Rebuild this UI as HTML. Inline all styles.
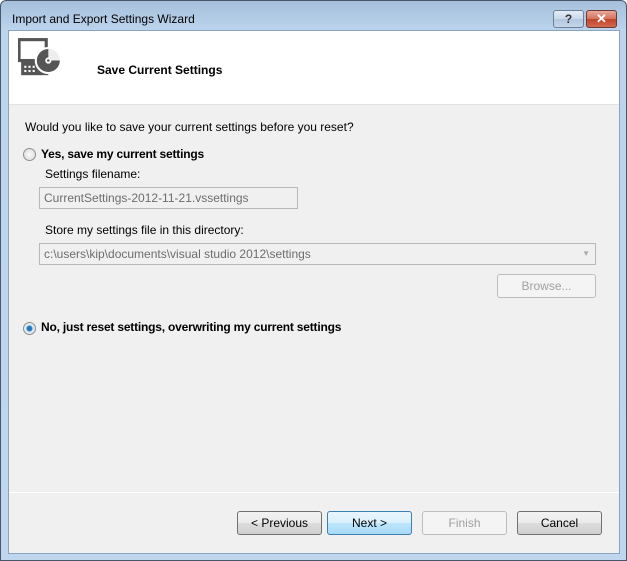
<!DOCTYPE html>
<html><head><style>
*{margin:0;padding:0;box-sizing:border-box}
body{width:627px;height:561px;overflow:hidden;font-family:"Liberation Sans",sans-serif;font-size:12px;color:#000}
#win{position:absolute;left:0;top:0;width:627px;height:561px;border:1px solid #48586a;border-radius:6px 6px 0 0;background:linear-gradient(#a6c0dc,#bcd4ec 30px,#bfd6ee);}
.t{position:absolute;white-space:nowrap}
#client{position:absolute;left:7px;top:29px;width:612px;height:524px;background:#f0f0f0;border:1px solid #8aa3bf}
#hdr{position:absolute;left:0;top:0;width:610px;height:74px;background:#fff;border-bottom:1px solid #e3e3e3}
.btn{position:absolute;height:24px;border:1px solid #707070;border-radius:3px;background:linear-gradient(#f2f2f2,#ebebeb 50%,#dddddd 50%,#cfcfcf);text-align:center;line-height:22px}
.inp{position:absolute;border:1px solid #b8b8b8;background:#f0f0f0;color:#6d6d6d;padding-left:4px;line-height:20px;height:22px}
.radio{position:absolute;width:13px;height:13px;border-radius:50%;border:1px solid #8e8f8f;background:radial-gradient(#fafafa,#d8d8d8)}
</style></head><body>
<div id="win">
<div class="t" style="left:11px;top:11px;font-size:12px;color:#000">Import and Export Settings Wizard</div>
<div style="position:absolute;left:552px;top:9px;width:31px;height:18px;border:1px solid #6d7f95;border-radius:3px;background:linear-gradient(#e4edf7,#c9d8ea 50%,#b2c6de 50%,#c4d6ea);color:#333;text-align:center;font-weight:bold;line-height:16px">?</div>
<div style="position:absolute;left:585px;top:9px;width:31px;height:18px;border:1px solid #6a3a35;border-radius:3px;background:linear-gradient(#e8a898,#d4705c 50%,#c0412a 50%,#d26a4f);color:#fff;text-align:center;font-weight:bold;line-height:16px;font-size:13px">✕</div>
<div id="client">
<div id="hdr">
<svg style="position:absolute;left:9px;top:7px" width="46" height="43" viewBox="0 0 44 40">
<rect x="1" y="1" width="26" height="20" fill="none" stroke="#555" stroke-width="3"/>
<rect x="3" y="22" width="26" height="13" fill="#555"/>
<g fill="#fff"><rect x="6" y="26" width="2" height="2"/><rect x="10" y="26" width="2" height="2"/><rect x="14" y="26" width="2" height="2"/><rect x="18" y="26" width="2" height="2"/><rect x="6" y="30" width="2" height="2"/><rect x="10" y="30" width="2" height="2"/><rect x="14" y="30" width="2" height="2"/></g>
<circle cx="29" cy="21" r="12" fill="#555" stroke="#fff" stroke-width="2"/>
<circle cx="29" cy="21" r="3" fill="#fff"/><circle cx="29" cy="21" r="1.2" fill="#555"/>
<path d="M29 9 A12 12 0 0 1 41 21 L32 21 A3 3 0 0 0 29 18Z" fill="#fff" opacity=".9"/>
</svg>
<div class="t" style="left:88px;top:32px;font-weight:bold">Save Current Settings</div>
</div>
<div class="t" style="left:16px;top:89px">Would you like to save your current settings before you reset?</div>
<div class="radio" style="left:14px;top:117px"></div>
<div class="t" style="left:32px;top:116px;font-weight:bold;letter-spacing:-0.2px">Yes, save my current settings</div>
<div class="t" style="left:36px;top:136px">Settings filename:</div>
<div class="inp" style="left:30px;top:156px;width:259px">CurrentSettings-2012-11-21.vssettings</div>
<div class="t" style="left:36px;top:192px">Store my settings file in this directory:</div>
<div class="inp" style="left:30px;top:212px;width:557px">c:\users\kip\documents\visual studio 2012\settings<span style="position:absolute;right:5px;top:0;font-size:8px;color:#aaa">▼</span></div>
<div class="btn" style="left:488px;top:243px;width:99px;border-color:#bdbdbd;background:#f4f4f4;color:#a0a0a0">Browse...</div>
<div class="radio" style="left:14px;top:291px;background:radial-gradient(#1e6bb0 0,#2c82c9 2.5px,#dfe9f3 3.5px,#e8e8e8)"></div>
<div class="t" style="left:32px;top:289px;font-weight:bold;letter-spacing:-0.2px">No, just reset settings, overwriting my current settings</div>
<div style="position:absolute;left:0;top:461px;width:610px;height:1px;background:#dcdcdc;border-bottom:1px solid #fff"></div>
<div class="btn" style="left:228px;top:480px;width:85px">&lt; Previous</div>
<div class="btn" style="left:318px;top:480px;width:85px;border-color:#3c7fb1;background:linear-gradient(#eaf6fd,#d9f0fc 50%,#bee6fd 50%,#a7d9f5)">Next &gt;</div>
<div class="btn" style="left:413px;top:480px;width:85px;border-color:#bdbdbd;background:#f4f4f4;color:#a0a0a0">Finish</div>
<div class="btn" style="left:508px;top:480px;width:85px">Cancel</div>
</div>
</div>
</body></html>
